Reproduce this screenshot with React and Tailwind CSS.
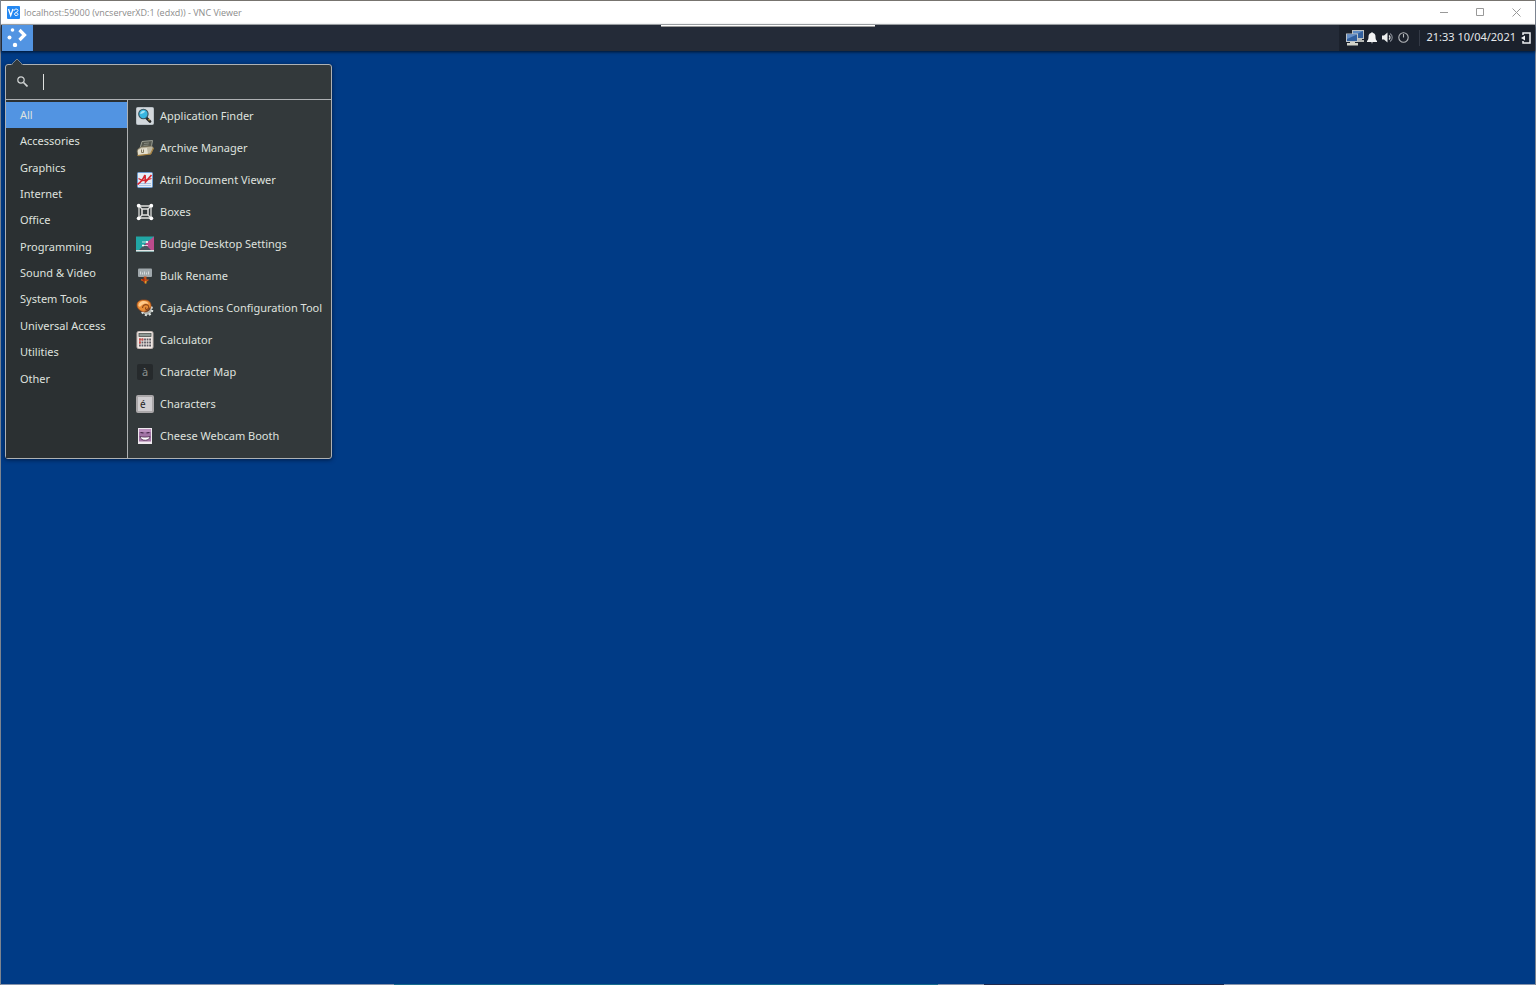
const categories = [
  "All", "Accessories", "Graphics", "Internet", "Office", "Programming",
  "Sound & Video", "System Tools", "Universal Access", "Utilities", "Other",
];

function FinderIcon() {
  return (
    <svg viewBox="0 0 18 18" className="size-[18px] shrink-0" aria-hidden="true">
      <rect x="0.5" y="0.5" width="17" height="17" rx="1" fill="#d3d8dc" stroke="#b7bfc4" />
      <path d="M10.5 11 14 14.5" stroke="#26292b" strokeWidth="2.8" strokeLinecap="round" />
      <path d="m12.6 12.3 1 1" stroke="#c5a138" strokeWidth="1.6" />
      <circle cx="7.4" cy="7" r="4.7" fill="#38b6df" stroke="#36535f" strokeWidth="1.1" />
      <path d="M4.2 7a3.3 3.3 0 0 1 5-2.8C8 6 6.2 6.5 4.2 7Z" fill="#a4e4f5" />
    </svg>
  );
}

function ArchiveIcon() {
  return (
    <svg viewBox="0 0 18 18" className="size-[18px] shrink-0" aria-hidden="true">
      <path d="m6 2.500 10.500-1L15 10 3.500 11Z" fill="#55584f" stroke="#a5a89c" strokeWidth=".9" />
      <path d="m8 4.500 5-.5m-5.500 2.500 5-.5" stroke="#85887d" />
      <path d="m2 10 3-2 11-1 1.500 2-2.500 6L2 17l-1-5Z" fill="#bdb7a1" stroke="#6b634c" strokeWidth=".7" />
      <path d="m2 11 3-1.500 6-.5 1 6-10 1Z" fill="#e4dfcf" />
      <path d="M1.500 16.500 14.500 15l3-6" fill="none" stroke="#a8823f" strokeWidth="1.200" />
      <path d="M5.500 10.500v3h2v-3" fill="none" stroke="#817961" />
    </svg>
  );
}

function AtrilIcon() {
  return (
    <svg viewBox="0 0 18 18" className="size-[18px] shrink-0" aria-hidden="true">
      <rect x="1.500" y="1.500" width="15" height="15" rx="1" fill="#e6edf5" stroke="#6b9bd1" />
      <path d="M3 12.500h12M3 14.500h12" stroke="#a9c5e6" />
      <path d="M1.500 13.500c3-2 5.500-5 7.500-9.500l.5 7L15.500 4" fill="none" stroke="#d52730" strokeWidth="1.700" />
      <path d="m2.500 7.500 4 2 4-.5 5-1.500" fill="none" stroke="#d52730" strokeWidth="1.300" />
    </svg>
  );
}

function BoxesIcon() {
  return (
    <svg viewBox="0 0 18 18" className="size-[18px] shrink-0" fill="none" stroke="#dededc" aria-hidden="true">
      <path d="M3 3h12v12H3Z" strokeWidth="1.300" />
      <path d="M6 6h6v6H6Z" strokeWidth="1.600" />
      <path d="m2 2 4 4m10-4-4 4M2 16l4-4m10 4-4-4" strokeWidth="1.300" />
      <g fill="#fff" stroke="none"><circle cx="2.700" cy="2.700" r="1.900" /><circle cx="15.300" cy="2.700" r="1.900" /><circle cx="2.700" cy="15.300" r="1.900" /><circle cx="15.300" cy="15.300" r="1.900" /></g>
    </svg>
  );
}

function BudgieIcon() {
  return (
    <svg viewBox="0 0 18 18" className="size-[18px] shrink-0" aria-hidden="true">
      <path d="M0 1.500h18v15H0Z" fill="#21a6a5" />
      <path d="M18 1.500V15H9V9Z" fill="#bd4b8c" />
      <path d="m3 15 6-6 6 6Z" fill="#4a5560" />
      <path d="M0 15h18v1.500H0Z" fill="#e4e7e7" />
      <path d="M6 7h6M6 10.500h6" stroke="#f0f4f4" strokeWidth=".8" />
      <circle cx="11" cy="7" r="1" fill="#fff" /><circle cx="7" cy="10.500" r="1" fill="#fff" />
    </svg>
  );
}

function RenameIcon() {
  return (
    <svg viewBox="0 0 18 18" className="size-[18px] shrink-0" aria-hidden="true">
      <rect x="2" y="1.500" width="14" height="8.500" rx="1" fill="#a0a8ac" />
      <path d="M4.500 4.500v3m2-2v2m2-3v3m2-2v2m2-3v3" stroke="#d4d9db" />
      <path d="M7.800 9.500h2.700v3h2.500l-1 1.500-1.500.5L9 17l-1.500-2.500-2.500-1V12h2.800Z" fill="#c4511a" />
      <path d="m6 12.500 2.500 2V11" fill="#a3240a" />
      <path d="M9 14h1.500v2.500H9Z" fill="#d8a02c" />
    </svg>
  );
}

function CajaIcon() {
  return (
    <svg viewBox="0 0 18 18" className="size-[18px] shrink-0" aria-hidden="true">
      <circle cx="11" cy="11" r="5" fill="#a9aeaa" stroke="#dce0dd" strokeWidth="2.500" strokeDasharray="1.900 2" />
      <path d="M1 6c0-4 4-5.500 8-5 4 0 6.500 3 6 6.500-.5 3.500-3.500 5.500-6.500 5.500L5 12 3 10.500C1.800 9 1 8 1 6Z" fill="#e88d37" stroke="#a94c17" strokeWidth=".7" />
      <path d="M2.500 7C2 4 5 2 8 2c2 0 4 1 4.500 3-2-1-5-.5-6.500 1-1 1-2 2.500-3.500 1Z" fill="#ffc98a" />
      <path d="M6.500 9c0-3 3-4 5-3 2 1 1.500 4-.5 4.500-1.500.4-2-1.500-.8-2" fill="none" stroke="#8a4319" strokeWidth="1.100" />
      <path d="M8 12c2 0 5-1 6-4 1 3-3 6-6 4Z" fill="#5c3827" />
    </svg>
  );
}

function CalculatorIcon() {
  return (
    <svg viewBox="0 0 18 18" className="size-[18px] shrink-0" aria-hidden="true">
      <rect x="1" y=".5" width="16" height="17" rx="1.500" fill="#f0e8e4" stroke="#c4b8b4" />
      <rect x="3" y="2.500" width="12" height="3" fill="#8d9894" stroke="#4c5350" strokeWidth=".8" />
      <path d="M3 8.500h12M3 11.500h12M3 14.500h12" stroke="#5d5a62" strokeWidth="1.800" strokeDasharray="1.800 .75" />
      <path d="M3 8.500h1.800m.7 0h1.800M3 11.500h1.800" stroke="#d94b46" strokeWidth="1.800" />
    </svg>
  );
}

function KeyIcon({ label, dark }) {
  return (
    <span
      aria-hidden="true"
      className={
        dark
          ? "mx-px flex size-4 shrink-0 items-center justify-center rounded-xs bg-[#262a2c] text-[11px] leading-4 text-[#8a908f]"
          : "flex size-[18px] shrink-0 items-center rounded-xs border-2 border-[#aaa7a9] bg-[#d0cdd0] pl-[2px] text-[10px] leading-3 text-[#252525]"
      }
    >
      {label}
    </span>
  );
}

function CheeseIcon() {
  return (
    <svg viewBox="0 0 18 18" className="size-[18px] shrink-0" aria-hidden="true">
      <rect x="2" y="1" width="14" height="16" fill="#efe9ef" />
      <rect x="3" y="2" width="12" height="12.500" fill="#a173a4" />
      <path d="M3 2h12v3H3Z" fill="#bb8fbd" />
      <path d="m4.500 5.500 3 .5m6-.5-3 .5" stroke="#3b213e" strokeWidth="1.200" />
      <path d="M4 9.500c3 .8 7 .8 10 0 0 4.500-9 5.500-10 0Z" fill="#fff" stroke="#492749" strokeWidth=".8" />
    </svg>
  );
}

const apps = [
  ["Application Finder", <FinderIcon />],
  ["Archive Manager", <ArchiveIcon />],
  ["Atril Document Viewer", <AtrilIcon />],
  ["Boxes", <BoxesIcon />],
  ["Budgie Desktop Settings", <BudgieIcon />],
  ["Bulk Rename", <RenameIcon />],
  ["Caja-Actions Configuration Tool", <CajaIcon />],
  ["Calculator", <CalculatorIcon />],
  ["Character Map", <KeyIcon label="à" dark />],
  ["Characters", <KeyIcon label="é" />],
  ["Cheese Webcam Booth", <CheeseIcon />],
];

function TitleBar() {
  return (
    <header className="flex h-6 items-center justify-between border-b border-[#b9bab9] bg-white">
      <div className="flex items-center gap-1 pl-1.5">
        <svg viewBox="0 0 13 13" className="size-[13px]" aria-hidden="true">
          <rect width="13" height="13" rx="1" fill="#2488f2" />
          <path d="m1.500 3 2.200 6.500L6 3" fill="none" stroke="#fff" strokeWidth="1.300" />
          <path d="M7 5C7 2.500 11 2.500 11 4.500 11 6.500 7.500 6 7.500 8.300c0 1.700 3.500 1.700 3.500 0C11 7 9.500 7 9 6.500" fill="none" stroke="#fff" />
        </svg>
        <h1 className="font-['Open_Sans',sans-serif] text-[9px] leading-4 text-[#8c8c8c]">
          localhost:59000 (vncserverXD:1 (edxd)) - VNC Viewer
        </h1>
      </div>
      <div className="flex pr-px">
        <button aria-label="Minimize" className="flex h-5 w-9 items-center justify-center">
          <svg viewBox="0 0 9 9" className="size-[9px]" stroke="#999" aria-hidden="true"><path d="M0 4.500h8" /></svg>
        </button>
        <button aria-label="Maximize" className="flex h-5 w-9 items-center justify-center">
          <svg viewBox="0 0 9 9" className="size-[9px]" fill="none" stroke="#999" aria-hidden="true"><path d="M.5.500h7v7h-7Z" /></svg>
        </button>
        <button aria-label="Close" className="flex h-5 w-9 items-center justify-center">
          <svg viewBox="0 0 9 9" className="size-[9px]" stroke="#999" aria-hidden="true"><path d="m.5.500 8 8m0-8-8 8" /></svg>
        </button>
      </div>
    </header>
  );
}

function Tray() {
  return (
    <div className="flex items-center bg-[#1b212c] pb-px pl-[7px] pr-1 text-[11px] text-[#e4e7ea]">
      <button aria-label="Network">
        <svg viewBox="0 0 18 17" className="h-[17px] w-[18px]" aria-hidden="true">
          <path d="M6 1h12v9H6Z" fill="#b9bfc2" /><path d="M7 2h10v7H7Z" fill="#315f9e" /><path d="M7 2h10L7 7Z" fill="#5e8bc4" /><path d="M11 10h5v1h2v2h-7Z" fill="#b5b8b5" />
          <path d="M0 4.500h12V13H0Z" fill="#bcc3c8" /><path d="M1 5.500h10V12H1Z" fill="#305f9f" /><path d="M1 5.500h10L1 10Z" fill="#658fc7" /><path d="M4 13h5v1h3v2.500H1V14h3Z" fill="#d2d3c9" />
        </svg>
      </button>
      <button aria-label="Notifications" className="ml-[3px]">
        <svg viewBox="0 0 10 12" className="h-3 w-2.5" fill="#f2f3f4" aria-hidden="true"><path d="M5 0 6 1c2 .5 2.500 2 2.500 4 0 2 .5 3 1.500 4v1H0V9c1-1 1.500-2 1.500-4 0-2 .5-3.500 2.500-4Zm-1 10.500h2L5 11.500Z" /></svg>
      </button>
      <button aria-label="Volume" className="ml-[5px]">
        <svg viewBox="0 0 11 11" className="size-[11px]" fill="#eceeef" aria-hidden="true"><path d="M0 3.500h2L5.500.5v10L2 7.500H0Z" /><path d="M7 3.500c1.300 1 1.300 3 0 4" fill="none" stroke="#eceeef" strokeWidth="1.200" /><path d="M8 1.500c3 2 3 6 0 8" fill="none" stroke="#818791" strokeWidth="1.200" /></svg>
      </button>
      <button aria-label="Power" className="ml-[5px]">
        <svg viewBox="0 0 11 11" className="size-[11px]" fill="none" stroke="#b5b8bc" strokeWidth="1.100" aria-hidden="true"><circle cx="5.500" cy="5.500" r="4.700" /><path d="M5.500 2v3.500" /></svg>
      </button>
      <span className="ml-2.5 h-4 w-px bg-[#343a46]" />
      <time className="ml-[7px] whitespace-nowrap">21:33 10/04/2021</time>
      <button aria-label="Show desktop" className="ml-[5px]">
        <svg viewBox="0 0 10 12" className="h-3 w-2.5" fill="none" stroke="#eef0f2" strokeWidth="1.500" aria-hidden="true"><path d="M2 3V1h7v10H2V9" /><path d="m0 6 4-2.500v5Z" fill="#eef0f2" stroke="none" /></svg>
      </button>
    </div>
  );
}

function Menu() {
  return (
    <section aria-label="Applications" className="relative ml-1 mt-[13px] w-[327px] rounded-[3px] border border-[#aeb1b3] bg-[#33393b] text-[11px] text-[#dfe1df] shadow-[0_1px_4px_#001c45]">
      <svg viewBox="0 0 14 8" className="absolute -top-[7px] left-1 h-2 w-3.5" aria-hidden="true">
        <path d="m1 8 6-7 6 7Z" fill="#33393b" /><path d="m1 7 6-6 6 6" fill="none" stroke="#77838c" />
      </svg>
      <label className="flex h-[35px] items-center gap-3 border-b border-[#aeb1b3] pb-px pl-[11px] pr-3">
        <svg viewBox="0 0 11 11" className="size-[11px]" fill="none" stroke="#d1d4d4" aria-hidden="true"><circle cx="4" cy="4" r="3.200" strokeWidth="1.200" /><path d="m6.500 6.500 4 4" strokeWidth="1.700" /></svg>
        <span className="flex min-w-0 grow items-center pl-[3px]">
          <span className="h-4 w-px bg-[#dfe1df]" />
          <input aria-label="Search applications" className="min-w-0 grow bg-transparent outline-none" />
        </span>
      </label>
      <div className="flex">
        <nav className="w-[122px] border-r border-[#aeb1b3] bg-[#2b3032] pt-0.5">
          <ul className="flex h-[290px] flex-col">
            {categories.map((name, i) => (
              <li key={name} className="flex flex-1">
                <button className={i === 0 ? "grow bg-[#5294e2] pl-3.5 text-left" : "grow pl-3.5 text-left"}>{name}</button>
              </li>
            ))}
          </ul>
        </nav>
        <ul className="grow pb-1.5">
          {apps.map(([name, icon]) => (
            <li key={name}>
              <button className="flex h-8 w-full items-center gap-1.5 whitespace-nowrap pl-2 text-left">
                {icon}
                <span>{name}</span>
              </button>
            </li>
          ))}
        </ul>
      </div>
    </section>
  );
}

export default function App() {
  return (
    <div className="flex min-h-screen flex-col border-x border-[#7c8490] bg-[#003b86] font-['Noto_Sans',sans-serif]">
      <div className="h-px bg-[#77746f]" />
      <TitleBar />
      <div className="relative flex h-[26px] justify-between bg-[#242b38] shadow-[0_1px_3px_#001329]">
        <div className="absolute left-[43%] top-0 h-0.5 w-[214px] border-b border-[#999] bg-white" />
        <button aria-label="Application menu" className="ml-px flex w-[31px] items-center justify-center bg-[#5294e2] pb-0.5 pr-0.5">
          <svg viewBox="0 0 20 20" className="size-5" fill="#fff" aria-hidden="true">
            <circle cx="5.500" cy="3" r="1.800" /><circle cx="2.500" cy="10.500" r="2" /><circle cx="8" cy="18" r="2.200" />
            <path d="m12.500 3 5 5-5 5" fill="none" stroke="#fff" strokeWidth="3.200" />
          </svg>
        </button>
        <Tray />
      </div>
      <main className="grow"><Menu /></main>
      <div className="flex h-px bg-[#8593ab]">
        <span className="ml-[25.6%] w-[35.5%] bg-[#176a8d]" />
        <span className="ml-[3%] w-[15.6%] bg-[#202a4d]" />
      </div>
    </div>
  );
}
